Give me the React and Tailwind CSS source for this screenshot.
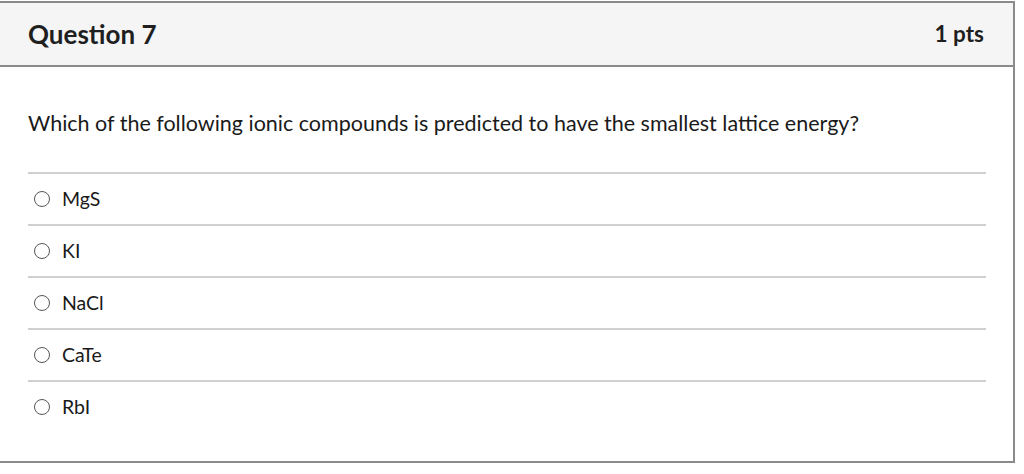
import React from "react";

const answers = ["MgS", "KI", "NaCl", "CaTe", "RbI"];

const App = () => {
  return (
    <div className="w-[1024px] h-[474px] bg-white pt-px" style={{ fontFamily: "Lato, 'Open Sans', sans-serif" }}>
      <div className="w-[1015px] h-[462px] border-t-2 border-r-2 border-b-2 border-[#8a8a8a]">
        {/* header */}
        <div className="h-[64px] bg-[#f5f5f5] border-b-2 border-[#8a8a8a] flex items-center justify-between pl-[28px] pr-[29px]">
          <h2 className="text-[26px] font-bold text-[#1f1f1f] leading-none">Question 7</h2>
          <span className="text-[22.5px] font-bold text-[#1f1f1f] leading-none">1 pts</span>
        </div>
        {/* body */}
        <div className="pl-[28px] pr-[27px]">
          <p className="text-[21.5px] leading-[32px] text-[#1a1a1a] pt-[40px] pb-[33px]">
            Which of the following ionic compounds is predicted to have the smallest lattice energy?
          </p>
          <div>
            {answers.map((item, index) => (
              <div key={index} className="h-[52px] border-t-2 border-[#d0d0d0] flex items-center gap-[12px] pl-[6px]">
                <span className="w-[16px] h-[16px] rounded-full border-[1.5px] border-[#555] bg-white"></span>
                <span className="text-[19.5px] text-[#1a1a1a]">{item}</span>
              </div>
            ))}
          </div>
        </div>
      </div>
    </div>
  );
};

export default App;
